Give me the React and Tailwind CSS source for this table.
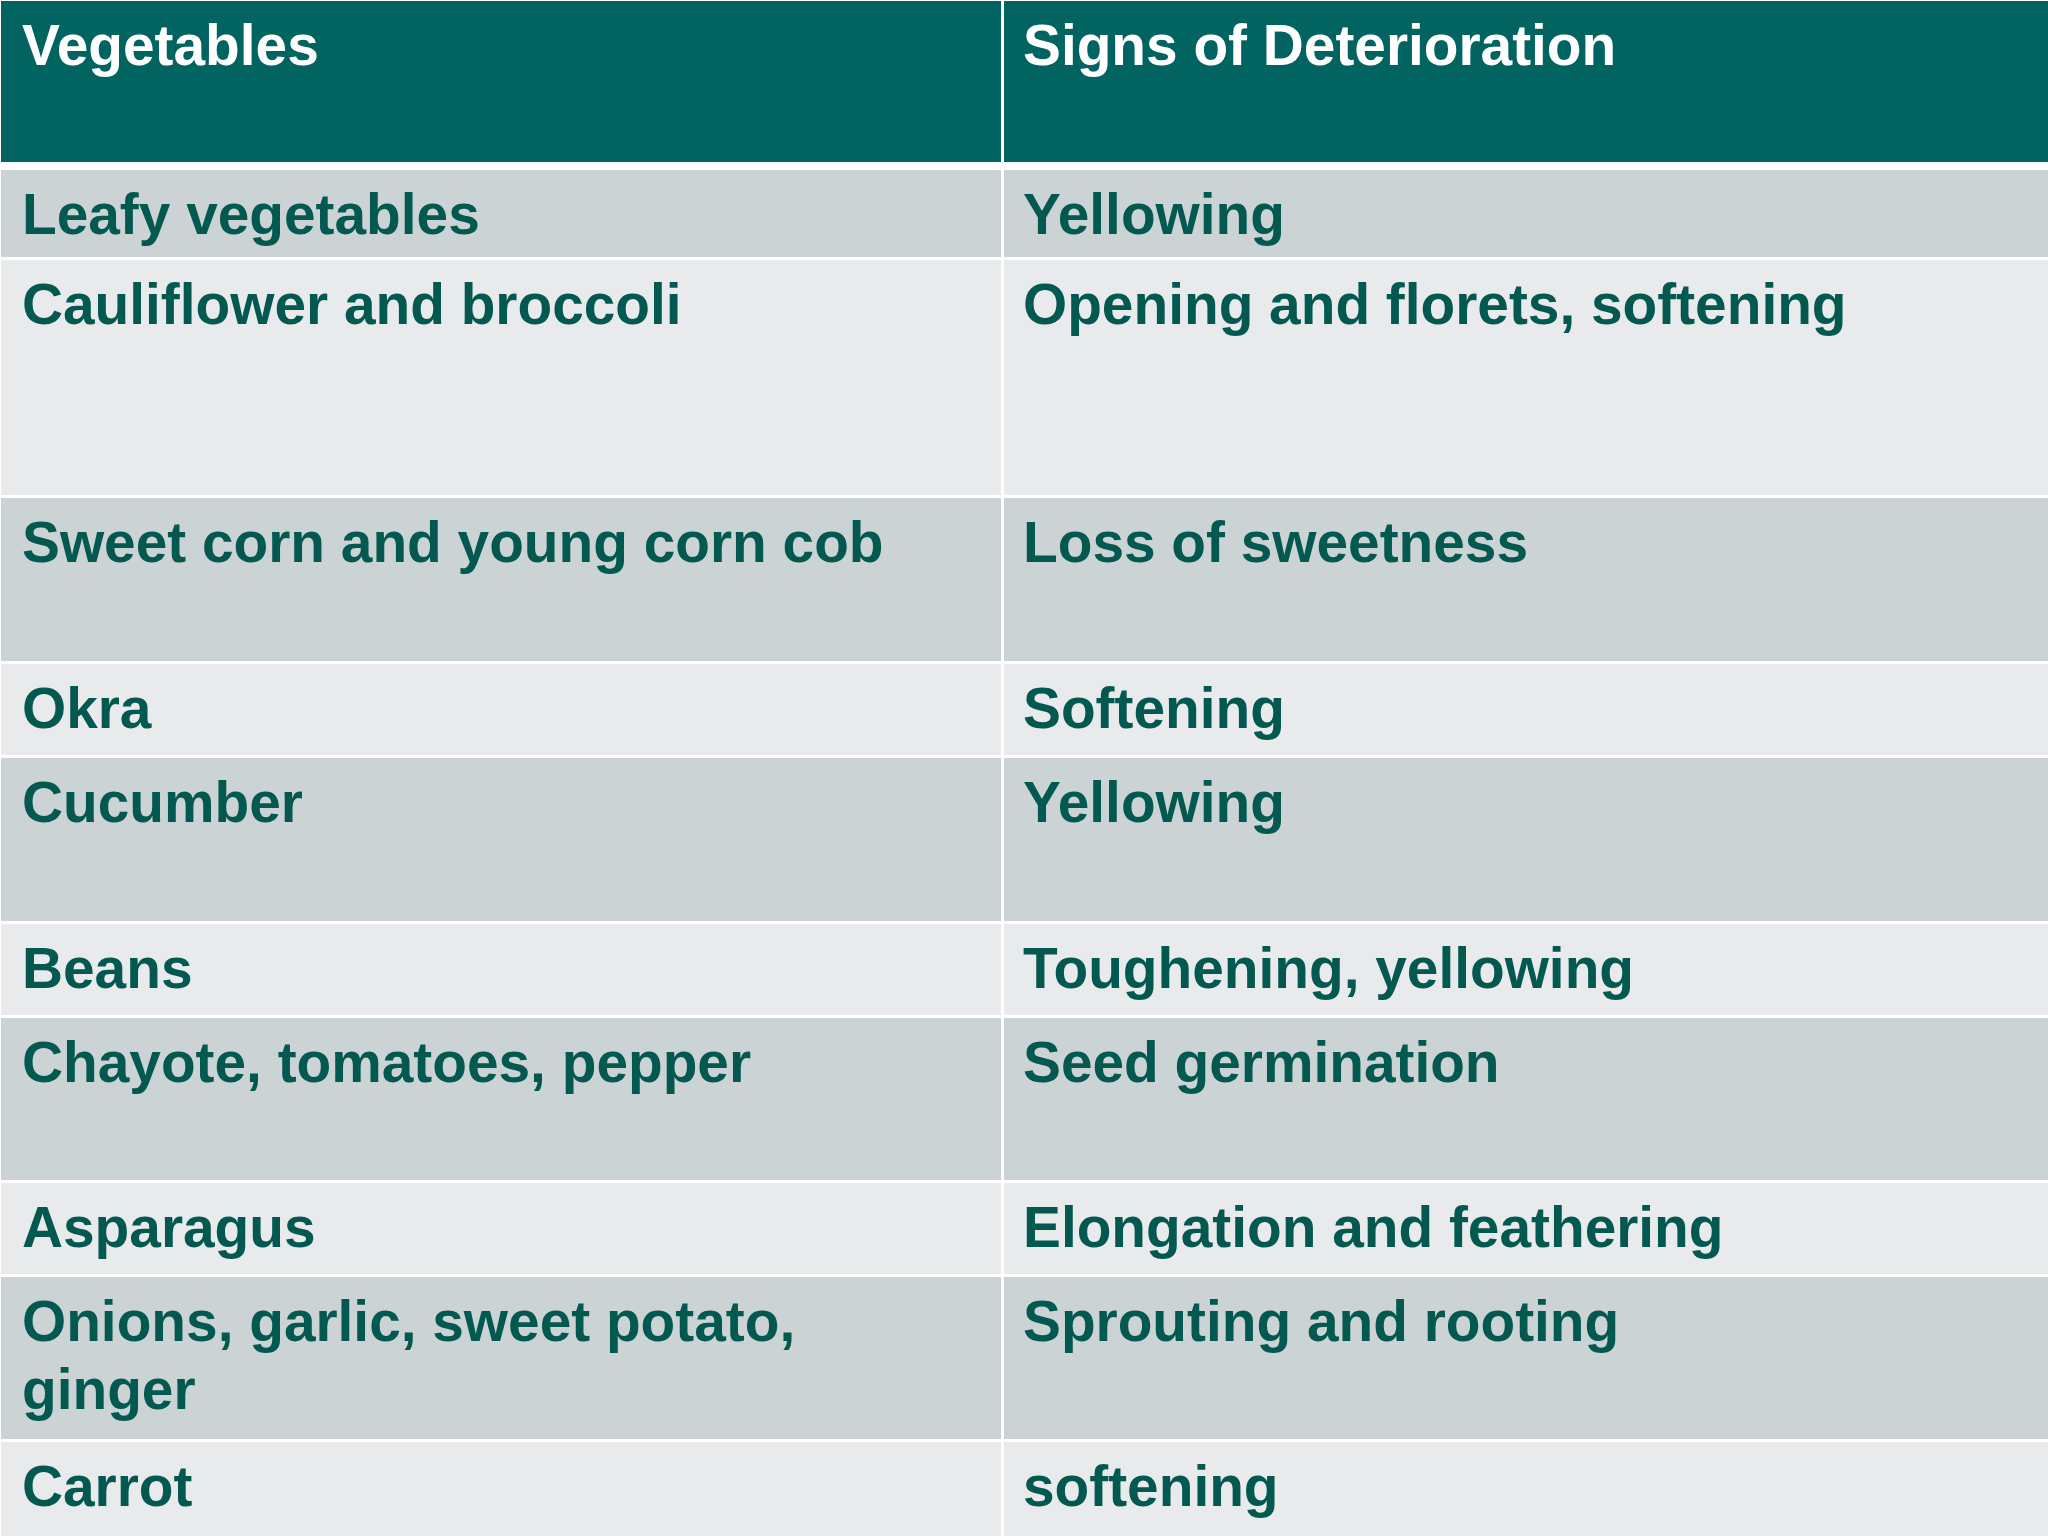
const rows = [
  { veg: "Leafy vegetables", sign: "Yellowing", h: "h-[87px]", dark: true },
  { veg: "Cauliflower and broccoli", sign: "Opening and florets, softening", h: "h-[235px]", dark: false },
  { veg: "Sweet corn and young corn cob", sign: "Loss of sweetness", h: "h-[163px]", dark: true },
  { veg: "Okra", sign: "Softening", h: "h-[91px]", dark: false },
  { veg: "Cucumber", sign: "Yellowing", h: "h-[163px]", dark: true },
  { veg: "Beans", sign: "Toughening, yellowing", h: "h-[91px]", dark: false },
  { veg: "Chayote, tomatoes, pepper", sign: "Seed germination", h: "h-[162px]", dark: true },
  { veg: "Asparagus", sign: "Elongation and feathering", h: "h-[91px]", dark: false },
  {
    veg: (
      <>
        Onions, garlic, sweet potato,
        <br />
        ginger
      </>
    ),
    sign: "Sprouting and rooting",
    h: "h-[162px]",
    dark: true,
  },
  { veg: "Carrot", sign: "softening", h: "h-[94px]", dark: false },
];

function Cell({ children, className }) {
  return <div className={`pr-5 pt-[11px] ${className}`}>{children}</div>;
}

export default function App() {
  return (
    <div
      className="w-[2048px] h-[1536px] overflow-hidden bg-white pl-px pt-px font-bold text-[56.8px] leading-[68px]"
      style={{ fontFamily: '"Liberation Sans", Arial, sans-serif' }}
    >
      {/* Header */}
      <div className="grid grid-cols-[1000px_1fr] gap-x-[3px] h-[161px]">
        <Cell className="pl-[21px] bg-[#016461] text-white">Vegetables</Cell>
        <Cell className="pl-[19px] bg-[#016461] text-white">Signs of Deterioration</Cell>
      </div>

      {/* Body */}
      <div className="flex flex-col gap-[3px] mt-[8px]">
        {rows.map((r, i) => {
          const bg = r.dark ? "bg-[#cbd3d4]" : "bg-[#e8eaeb]";
          return (
            <div key={i} className={`grid grid-cols-[1000px_1fr] gap-x-[3px] shrink-0 ${r.h}`}>
              <Cell className={`pl-[21px] ${bg} text-[#03584f]`}>{r.veg}</Cell>
              <Cell className={`pl-[19px] ${bg} text-[#03584f]`}>{r.sign}</Cell>
            </div>
          );
        })}
      </div>
    </div>
  );
}
